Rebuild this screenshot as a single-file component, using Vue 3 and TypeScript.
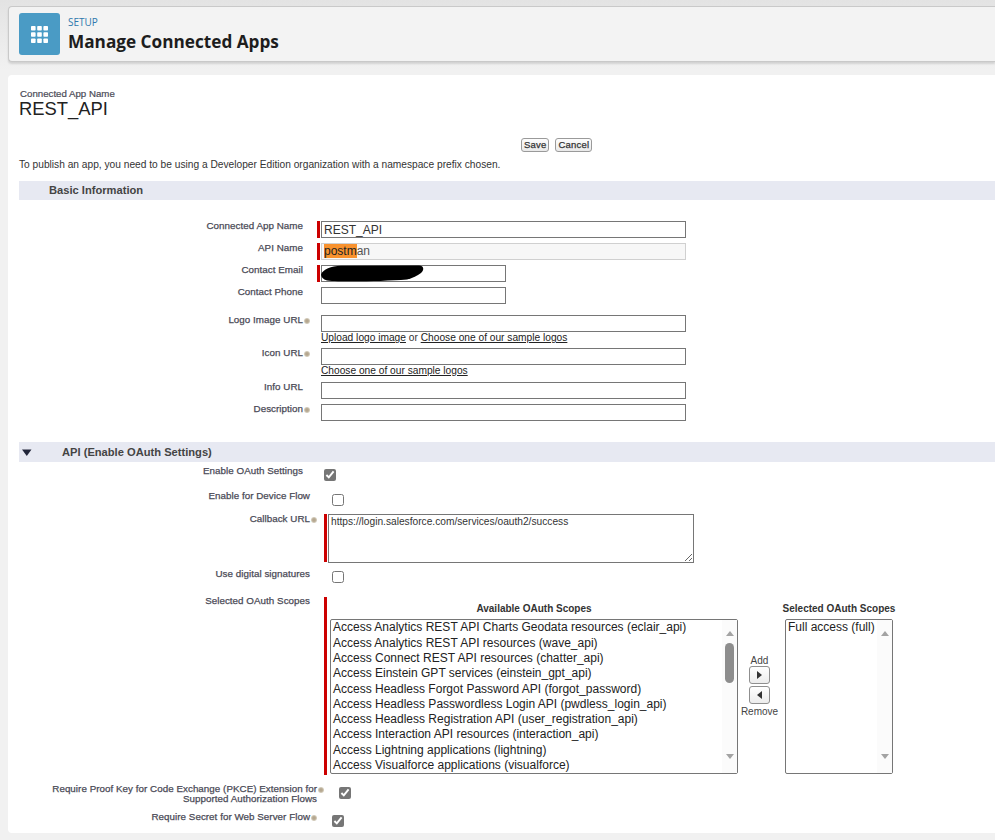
<script setup lang="ts">
const scopes: string[] = [
  'Access Analytics REST API Charts Geodata resources (eclair_api)',
  'Access Analytics REST API resources (wave_api)',
  'Access Connect REST API resources (chatter_api)',
  'Access Einstein GPT services (einstein_gpt_api)',
  'Access Headless Forgot Password API (forgot_password)',
  'Access Headless Passwordless Login API (pwdless_login_api)',
  'Access Headless Registration API (user_registration_api)',
  'Access Interaction API resources (interaction_api)',
  'Access Lightning applications (lightning)',
  'Access Visualforce applications (visualforce)'
]
</script>

<template>
  <div class="page">
    <header class="head">
      <div class="app-icon">
        <svg width="17" height="17" viewBox="0 0 17 17" fill="#fff">
          <g v-for="r in 3" :key="r">
            <rect v-for="c in 3" :key="c" :x="(c - 1) * 6.2" :y="(r - 1) * 6.2" width="4.6" height="4.6" rx="0.8" />
          </g>
        </svg>
      </div>
      <div>
        <div class="crumb">SETUP</div>
        <h1 class="title">Manage Connected Apps</h1>
      </div>
    </header>

    <main class="card">
      <div class="small-name">Connected App Name</div>
      <div class="big-name">REST_API</div>
      <div class="actions">
        <button class="btn">Save</button>
        <button class="btn">Cancel</button>
      </div>
      <p class="intro">To publish an app, you need to be using a Developer Edition organization with a namespace prefix chosen.</p>

      <h2 class="section basic-head"><span class="section-basic">Basic Information</span></h2>

      <div class="basic">
        <div class="row">
          <label class="lab w284">Connected App Name</label>
          <span class="hint-col"></span>
          <span class="req"></span>
          <input class="inp long" value="REST_API" />
        </div>
        <div class="row mt5">
          <label class="lab w284">API Name</label>
          <span class="hint-col"></span>
          <span class="req"></span>
          <div class="inp long api"><mark class="sel">postm</mark>an</div>
        </div>
        <div class="row mt5">
          <label class="lab w284">Contact Email</label>
          <span class="hint-col"></span>
          <span class="req"></span>
          <div class="redact-wrap">
            <input class="inp short" />
            <svg class="redact" width="104" height="17" viewBox="0 0 104 17">
              <path d="M0 9.5C2 4 10 1 20 .7L98 .5C103 .5 103.500 5 100 8C96 11 92 13 86 14.500C60 16.500 20 17 6 15.500C2 14.500 0 12 0 9.500Z" fill="#000" />
            </svg>
          </div>
        </div>
        <div class="row mt5">
          <label class="lab w284">Contact Phone</label>
          <span class="hint-col"></span>
          <span class="req none"></span>
          <input class="inp short" />
        </div>
        <div class="row mt11">
          <label class="lab w284">Logo Image URL</label>
          <span class="hint-col"><i class="hint"></i></span>
          <span class="req none"></span>
          <div>
            <input class="inp long" />
            <div class="links"><a>Upload logo image</a> or <a>Choose one of our sample logos</a></div>
          </div>
        </div>
        <div class="row mt5">
          <label class="lab w284">Icon URL</label>
          <span class="hint-col"><i class="hint"></i></span>
          <span class="req none"></span>
          <div>
            <input class="inp long" />
            <div class="links"><a>Choose one of our sample logos</a></div>
          </div>
        </div>
        <div class="row mt6">
          <label class="lab w284">Info URL</label>
          <span class="hint-col"></span>
          <span class="req none"></span>
          <input class="inp long" />
        </div>
        <div class="row mt5">
          <label class="lab w284">Description</label>
          <span class="hint-col"><i class="hint"></i></span>
          <span class="req none"></span>
          <input class="inp long" />
        </div>
      </div>

      <h2 class="section api-head">
        <svg class="twist" width="10" height="8" viewBox="0 0 10 8"><path d="M0 1.5H9.5L4.8 8Z" fill="#22263a" /></svg>
        <span>API (Enable OAuth Settings)</span>
      </h2>

      <div class="row mt4">
        <label class="lab w284">Enable OAuth Settings</label>
        <input class="cb cb-a" type="checkbox" checked />
      </div>
      <div class="row mt10">
        <label class="lab w291">Enable for Device Flow</label>
        <input class="cb cb-b" type="checkbox" />
      </div>
      <div class="row mt8">
        <label class="lab w291">Callback URL</label>
        <span class="hint-col"><i class="hint"></i></span>
        <span class="req tall-a"></span>
        <textarea class="area" readonly>https://login.salesforce.com/services/oauth2/success</textarea>
      </div>
      <div class="row mt6">
        <label class="lab w291">Use digital signatures</label>
        <input class="cb cb-b cb-near" type="checkbox" />
      </div>
      <div class="row mt14">
        <label class="lab w291 lab-up">Selected OAuth Scopes</label>
        <span class="hint-col"></span>
        <span class="req tall-b"></span>
        <div class="picker">
          <div class="pick-title"><span>Available OAuth Scopes</span></div>
          <span></span>
          <div class="pick-title"><span>Selected OAuth Scopes</span></div>

          <div class="listbox">
            <div class="items">
              <div v-for="s in scopes" :key="s" class="item">{{ s }}</div>
            </div>
            <div class="bar">
              <i class="arr up"></i>
              <i class="thumb"></i>
              <i class="arr down"></i>
            </div>
          </div>

          <div class="mover">
            <span>Add</span>
            <button class="mv"><i class="tri right"></i></button>
            <button class="mv"><i class="tri left"></i></button>
            <span>Remove</span>
          </div>

          <div class="listbox">
            <div class="items">
              <div class="item">Full access (full)</div>
            </div>
            <div class="bar">
              <i class="arr up"></i>
              <i class="thumb hidden"></i>
              <i class="arr down"></i>
            </div>
          </div>
        </div>
      </div>
      <div class="row mt9">
        <label class="lab w298">Require Proof Key for Code Exchange (PKCE) Extension for<br />Supported Authorization Flows</label>
        <i class="hint after"></i>
        <input class="cb cb-c" type="checkbox" checked />
      </div>
      <div class="row mt8">
        <label class="lab w291">Require Secret for Web Server Flow</label>
        <i class="hint after"></i>
        <input class="cb cb-d" type="checkbox" checked />
      </div>
    </main>
  </div>
</template>

<style>
html, body { margin: 0; background: #f1f1f1; }
</style>

<style scoped>
.page {
  box-sizing: border-box;
  height: 840px;
  overflow: hidden;
  padding: 6px 0 0 8px;
  font-family: "Liberation Sans", Arial, sans-serif;
  background: linear-gradient(#e3e3e3, #f1f1f1 70px);
}
.head {
  display: flex;
  align-items: center;
  gap: 8px;
  height: 56px;
  box-sizing: border-box;
  padding-left: 10px;
  background: #f3f3f3;
  border: 1px solid #c9c9c9;
  border-right: 0;
  border-radius: 4px 0 0 4px;
  box-shadow: 0 2px 2px rgba(0, 0, 0, .12);
}
.app-icon {
  width: 41px;
  height: 42px;
  border-radius: 3px;
  background: #4a9bc5;
  display: flex;
  align-items: center;
  justify-content: center;
}
.crumb {
  font-family: "Open Sans", sans-serif;
  font-size: 10px;
  line-height: 12px;
  color: #2f78ad;
}
.title {
  margin: 3px 0 0;
  font-family: "Open Sans", sans-serif;
  font-size: 17.2px;
  line-height: 22px;
  font-weight: 700;
  color: #1d1d1d;
}
.card {
  margin-top: 13px;
  padding: 14px 0 6px 11px;
  background: #fff;
  border-radius: 4px 0 0 4px;
}
.small-name {
  font-size: 9.7px;
  line-height: 10px;
  color: #4a4a56;
  padding-left: 1px;
  -webkit-text-stroke: 0.2px #4a4a56;
}
.big-name {
  font-size: 18.4px;
  line-height: 20px;
  color: #222;
}
.actions {
  display: flex;
  gap: 6px;
  margin-top: 19px;
  padding-left: 502px;
}
.btn {
  height: 14px;
  padding: 0 2px;
  font-family: inherit;
  font-size: 9.5px;
  font-weight: 400;
  letter-spacing: .2px;
  line-height: 12px;
  color: #333;
  -webkit-text-stroke: 0.25px #333;
  background: linear-gradient(#fdfdfd, #e9e9e9);
  border: 1px solid #9a9a9a;
  border-radius: 3px;
}
.intro {
  margin: 8px 0 0;
  font-size: 10.2px;
  line-height: 10px;
  color: #333;
}
.section {
  display: flex;
  align-items: center;
  margin: 11px 0 0;
  height: 19px;
  font-size: 11.15px;
  font-weight: 700;
  color: #444;
  background: #e7e9f2;
}
.basic-head { padding-bottom: 2px; height: 17px; }
.section-basic { padding-left: 30px; }
.basic { padding-top: 21px; }
.api-head {
  height: 20px;
  margin-top: 21px;
  padding-left: 3px;
}
.twist { margin-right: 30px; }
.row {
  display: flex;
  align-items: flex-start;
}
.mt4 { margin-top: 4px; }
.mt5 { margin-top: 5px; }
.mt6 { margin-top: 6px; }
.mt8 { margin-top: 8px; }
.mt9 { margin-top: 9px; }
.mt10 { margin-top: 10px; }
.mt11 { margin-top: 11px; }
.mt14 { margin-top: 14px; }
.lab {
  flex: none;
  box-sizing: border-box;
  font-size: 9.8px;
  line-height: 10px;
  font-weight: 400;
  letter-spacing: .04px;
  text-align: right;
  color: #4a4a56;
  -webkit-text-stroke: 0.25px #4a4a56;
}
.lab-up { margin-top: -1px; margin-bottom: 1px; }
.w284 { width: 284px; }
.w291 { width: 291px; }
.w298 { width: 298px; }
.hint-col {
  flex: none;
  width: 14px;
  height: 12px;
  display: flex;
  align-items: center;
}
.hint {
  display: block;
  flex: none;
  width: 6px;
  height: 6px;
  margin-left: 1px;
  border-radius: 50%;
  background: radial-gradient(circle, #b5a78f 30%, #d9d3c5 70%);
}
.hint.after { margin-top: 3px; }
.req {
  flex: none;
  width: 3px;
  height: 17px;
  margin-right: 1px;
  background: #c00;
}
.req.none { background: transparent; }
.req.tall-a { height: 48px; }
.req.tall-b { height: 178px; margin-right: 3px; }
.inp {
  display: block;
  box-sizing: border-box;
  height: 17px;
  padding: 0 2px;
  font-family: inherit;
  font-size: 12px;
  line-height: 15px;
  color: #333;
  background: #fff;
  border: 1px solid #767676;
  border-radius: 0;
  outline: none;
}
.long { width: 365px; }
.short { width: 185px; }
.api {
  background: #f7f7f7;
  border-color: #d0d0d0;
  color: #555;
}
.sel { background: #f8922e; color: #222; }
.redact-wrap { position: relative; }
.redact { position: absolute; left: 0; top: 0; }
.links {
  margin-top: 1px;
  font-size: 10.2px;
  line-height: 10px;
  color: #333;
}
.links a { text-decoration: underline; color: #222; }
.cb {
  flex: none;
  width: 12px;
  height: 12px;
  margin: 3px 0 0;
  accent-color: #767676;
}
.cb-a { margin-left: 21px; }
.cb-b { margin-left: 22px; }
.cb-near { margin-top: 2px; }
.cb-c { margin-left: 15px; }
.cb-d { margin-left: 15px; }
.area {
  box-sizing: border-box;
  width: 366px;
  height: 49px;
  margin: 0;
  padding: 1px 2px;
  font-family: inherit;
  font-size: 10.2px;
  line-height: 11px;
  color: #333;
  border: 1px solid #767676;
  border-radius: 0;
  outline: none;
}
.picker {
  display: grid;
  grid-template-columns: 408px 47px 108px;
  grid-template-rows: 15px 155px;
  padding-top: 7px;
}
.pick-title {
  display: flex;
  justify-content: center;
  font-size: 10px;
  line-height: 10px;
  font-weight: 700;
  white-space: nowrap;
  color: #333;
}
.listbox {
  display: flex;
  box-sizing: border-box;
  height: 155px;
  background: #fff;
  border: 1px solid #767676;
  border-radius: 2px;
}
.items {
  flex: 1;
  min-width: 0;
  padding: 0.2px 0 0 2px;
}
.item {
  font-size: 12px;
  line-height: 15.33px;
  color: #222;
  white-space: nowrap;
}
.bar {
  flex: none;
  width: 15px;
  display: flex;
  flex-direction: column;
  align-items: center;
  background: #fbfbfb;
}
.thumb {
  display: block;
  width: 9px;
  height: 40px;
  margin-top: 7px;
  border-radius: 5px;
  background: #8d8d8d;
}
.thumb.hidden { visibility: hidden; }
.arr {
  display: block;
  width: 0;
  height: 0;
  border-left: 4px solid transparent;
  border-right: 4px solid transparent;
}
.arr.up { margin-top: 11px; border-bottom: 5px solid #a3a3a3; }
.arr.down { margin-top: 71px; border-top: 5px solid #a3a3a3; }
.mover {
  display: flex;
  flex-direction: column;
  align-items: center;
  padding: 36px 4px 0 0;
  font-size: 10px;
  line-height: 11px;
  color: #444;
}
.mv {
  display: flex;
  align-items: center;
  justify-content: center;
  width: 21px;
  height: 18px;
  padding: 0;
  margin-bottom: 2px;
  background: linear-gradient(#fff, #ececec);
  border: 1px solid #8f8f8f;
  border-radius: 3px;
}
.tri {
  display: block;
  width: 0;
  height: 0;
  border-top: 4px solid transparent;
  border-bottom: 4px solid transparent;
}
.tri.right { border-left: 5px solid #333; }
.tri.left { border-right: 5px solid #333; }
</style>
